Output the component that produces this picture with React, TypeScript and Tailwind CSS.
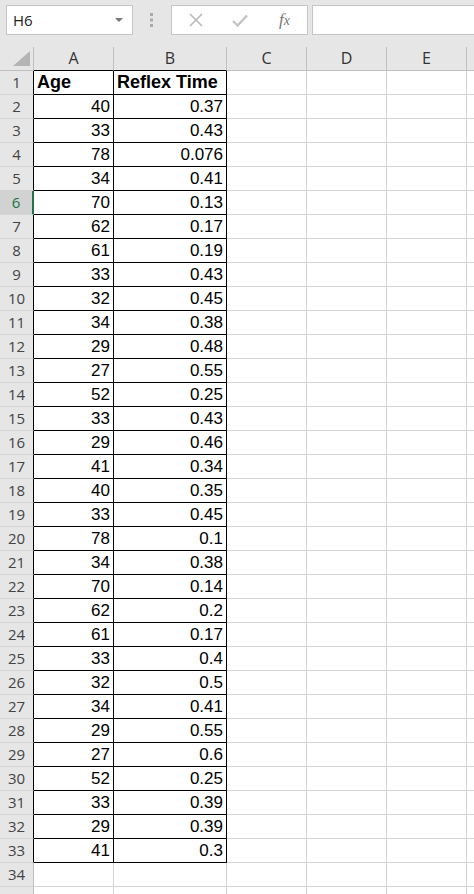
import React from 'react'

const data: [number, string][] = [
  [40, '0.37'], [33, '0.43'], [78, '0.076'], [34, '0.41'], [70, '0.13'],
  [62, '0.17'], [61, '0.19'], [33, '0.43'], [32, '0.45'], [34, '0.38'],
  [29, '0.48'], [27, '0.55'], [52, '0.25'], [33, '0.43'], [29, '0.46'],
  [41, '0.34'], [40, '0.35'], [33, '0.45'], [78, '0.1'], [34, '0.38'],
  [70, '0.14'], [62, '0.2'], [61, '0.17'], [33, '0.4'], [32, '0.5'],
  [34, '0.41'], [29, '0.55'], [27, '0.6'], [52, '0.25'], [33, '0.39'],
  [29, '0.39'], [41, '0.3'],
]

const cols = ['A', 'B', 'C', 'D', 'E', '']
const grid = 'grid grid-cols-[34px_80px_113px_80px_80px_80px_80px]'

function RowHead({ n }: { n: number }) {
  const sel = n === 6
  const inData = n <= 33
  return (
    <div
      className={
        'flex h-[24px] items-center justify-center border-b border-[#d4d4d4] text-[15px] ' +
        (sel
          ? 'bg-[#d2d2d2] text-[#217346] border-r-2 border-r-[#217346]'
          : inData
            ? 'bg-[#e6e6e6] text-[#444] border-r border-r-black'
            : 'bg-[#e6e6e6] text-[#444] border-r border-r-[#bfbfbf]')
      }
      style={{ fontFamily: '"Open Sans", sans-serif' }}
    >
      {n}
    </div>
  )
}

function Cell({ children, dark, bold }: { children?: React.ReactNode; dark?: boolean; bold?: boolean }) {
  return (
    <div
      className={
        'flex h-[24px] items-center overflow-hidden whitespace-nowrap border-b border-r px-[3px] text-black ' +
        (bold ? 'justify-start font-bold text-[18px] ' : 'justify-end text-[17px] ') +
        (dark ? 'border-black' : 'border-[#d4d4d4]')
      }
      style={{ fontFamily: '"Liberation Sans", Arial, sans-serif' }}
    >
      {children}
    </div>
  )
}

export default function App() {
  const rows = Array.from({ length: 36 }, (_, i) => i + 1)
  return (
    <div className="h-[894px] w-[474px] overflow-hidden bg-white">
      {/* formula bar */}
      <div className="flex h-[47px] items-start bg-[#e6e6e6] pt-[5px]">
        <div className="ml-[6px] flex h-[30px] w-[127px] items-center justify-between border border-[#c6c6c6] bg-white pl-[6px] pr-[9px] text-[15px] text-[#222]" style={{ fontFamily: '"Open Sans", sans-serif' }}>
          <span>H6</span>
          <svg width="8" height="5" viewBox="0 0 8 5"><path d="M0 0h8L4 4z" fill="#777" /></svg>
        </div>
        <div className="flex h-[30px] w-[38px] items-center justify-center">
          <svg width="4" height="14" viewBox="0 0 4 14">
            <rect x="0" y="0" width="3" height="3" fill="#aaa" />
            <rect x="0" y="5.5" width="3" height="3" fill="#aaa" />
            <rect x="0" y="11" width="3" height="3" fill="#aaa" />
          </svg>
        </div>
        <div className="flex h-[30px] w-[137px] items-center border border-[#c6c6c6] bg-white">
          <div className="flex w-[45px] justify-center pl-[2px]">
            <svg width="14" height="14" viewBox="0 0 14 14"><path d="M1 1l12 12M13 1L1 13" stroke="#b8b8b8" strokeWidth="1.6" /></svg>
          </div>
          <div className="flex w-[45px] justify-center">
            <svg width="16" height="13" viewBox="0 0 16 13"><path d="M1 7l4.5 4.5L15 1.5" stroke="#c4c4c4" strokeWidth="2.4" fill="none" /></svg>
          </div>
          <div className="flex w-[45px] justify-center text-[17px] italic text-[#777]" style={{ fontFamily: '"Liberation Serif", serif' }}>
            <span>f<span className="text-[14px]">x</span></span>
          </div>
        </div>
        <div className="ml-[4px] h-[30px] flex-1 border border-r-0 border-[#c6c6c6] bg-white" />
      </div>

      {/* column headers */}
      <div className={grid}>
        <div className="relative h-[24px] border-r border-b border-[#bfbfbf] bg-[#e6e6e6]">
          <svg className="absolute bottom-[4px] right-[3px]" width="17" height="15" viewBox="0 0 17 15"><path d="M17 0V15H0z" fill="#b4b4b4" /></svg>
        </div>
        {cols.map((c, i) => (
          <div
            key={i}
            className={
              'flex h-[24px] items-center justify-center border-r border-r-[#bfbfbf] border-b bg-[#e6e6e6] pb-[1px] text-[16px] text-[#333] ' +
              (i < 2 ? 'border-b-black' : 'border-b-[#bfbfbf]')
            }
            style={{ fontFamily: '"Open Sans", sans-serif' }}
          >
            {c}
          </div>
        ))}
      </div>

      {/* body */}
      <div className={grid}>
        {rows.map((n) => {
          const d = n >= 2 && n <= 33 ? data[n - 2] : null
          return (
            <React.Fragment key={n}>
              <RowHead n={n} />
              {n === 1 ? (
                <>
                  <Cell dark bold>Age</Cell>
                  <Cell dark bold>Reflex Time</Cell>
                </>
              ) : d ? (
                <>
                  <Cell dark>{d[0]}</Cell>
                  <Cell dark>{d[1]}</Cell>
                </>
              ) : (
                <>
                  <Cell />
                  <Cell />
                </>
              )}
              <Cell />
              <Cell />
              <Cell />
              <Cell />
            </React.Fragment>
          )
        })}
      </div>
    </div>
  )
}
